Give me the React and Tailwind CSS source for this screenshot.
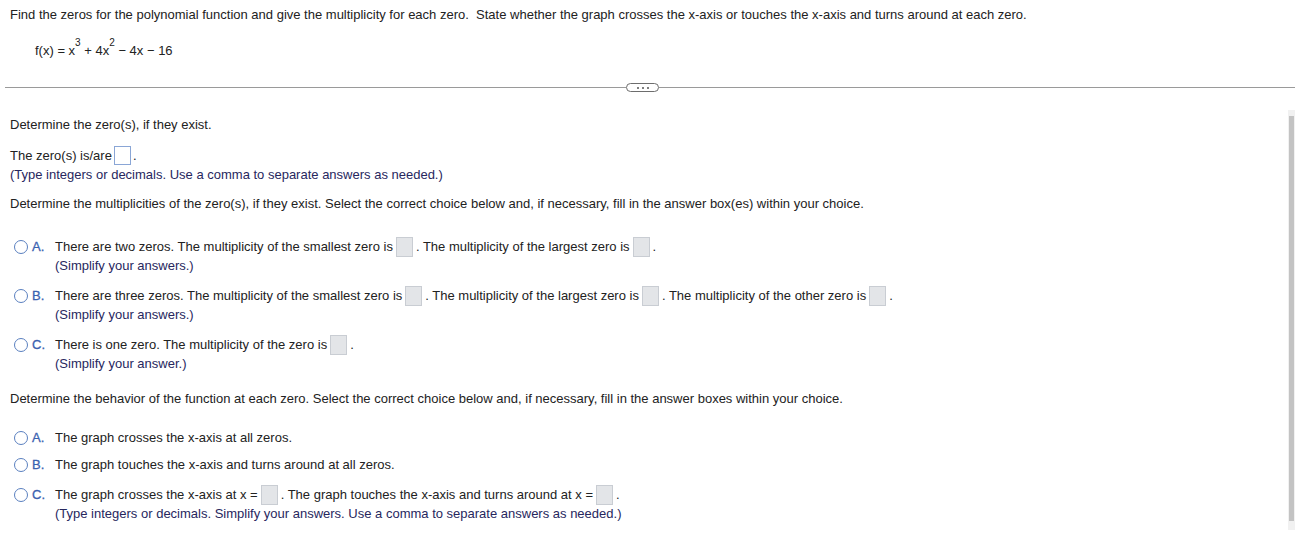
import React from 'react'

const font = { fontFamily: '"Liberation Sans", Arial, sans-serif' }

function Box({ active }) {
  return (
    <span
      className={
        active
          ? 'inline-block align-middle w-[17px] h-[19px] mx-[2px] border border-[#8aa6d6] bg-white'
          : 'inline-block align-middle w-[17px] h-[20px] mx-[3px] border border-[#c9cdd3] bg-[#e3e5e8]'
      }
    />
  )
}

function Radio({ letter }) {
  return (
    <div className="flex items-center h-[19px] w-[55px] shrink-0 pl-[14px]">
      <span className="inline-block w-[14px] h-[14px] rounded-full border border-[#5a7fbf] bg-white" />
      <span className="ml-[4px] text-[#3a62b0] text-[13px] [-webkit-text-stroke:0.3px_#3a62b0]">{letter}.</span>
    </div>
  )
}

function Choice({ letter, children, hint, className = '' }) {
  return (
    <div className={'flex items-start ' + className}>
      <Radio letter={letter} />
      <div>
        <div className="h-[19px] flex items-center text-[#222]">{children}</div>
        {hint && <div className="h-[19px] flex items-center text-[#27275e]">{hint}</div>}
      </div>
    </div>
  )
}

export default function App() {
  return (
    <div style={font} className="relative w-[1295px] h-[542px] bg-white text-[13px] leading-[19px] text-[#222] overflow-hidden">
      <div className="pl-[10px] pt-[5px]">
        Find the zeros for the polynomial function and give the multiplicity for each zero.&nbsp; State whether the graph crosses the x-axis or touches the x-axis and turns around at each zero.
      </div>
      <div className="pl-[35px] mt-[17px] h-[19px] flex items-center">
        <span>f(x) = x</span>
        <span className="relative -top-[8px] text-[10px]">3</span>
        <span>&nbsp;+ 4x</span>
        <span className="relative -top-[8px] text-[10px]">2</span>
        <span>&nbsp;− 4x − 16</span>
      </div>

      <div className="ml-[5px] mt-[23px] flex items-center h-[9px]">
        <div className="flex-1 h-px bg-[#9a9a9a]" />
        <div className="w-[33px] h-[9px] rounded-full border border-[#6d6d6d] bg-white flex items-center justify-center gap-[3px]">
          <span className="w-[2px] h-[2px] rounded-full bg-[#555]" />
          <span className="w-[2px] h-[2px] rounded-full bg-[#555]" />
          <span className="w-[2px] h-[2px] rounded-full bg-[#555]" />
        </div>
        <div className="flex-1 h-px bg-[#9a9a9a]" />
        <div className="w-[15px] h-px bg-[#9a9a9a]" />
      </div>

      <div className="pl-[10px] mt-[23px]">
        <div>Determine the zero(s), if they exist.</div>
        <div className="mt-[12px] h-[19px] flex items-center">
          The zero(s) is/are <Box active />.
        </div>
        <div className="text-[#27275e]">(Type integers or decimals. Use a comma to separate answers as needed.)</div>
        <div className="mt-[10px]">
          Determine the multiplicities of the zero(s), if they exist. Select the correct choice below and, if necessary, fill in the answer box(es) within your choice.
        </div>
      </div>

      <div className="mt-[24px]">
        <Choice letter="A" hint="(Simplify your answers.)">
          There are two zeros. The multiplicity of the smallest zero is <Box />. The multiplicity of the largest zero is <Box />.
        </Choice>
        <Choice letter="B" hint="(Simplify your answers.)" className="mt-[11px]">
          There are three zeros. The multiplicity of the smallest zero is <Box />. The multiplicity of the largest zero is <Box />. The multiplicity of the other zero is <Box />.
        </Choice>
        <Choice letter="C" hint="(Simplify your answer.)" className="mt-[11px]">
          There is one zero. The multiplicity of the zero is <Box />.
        </Choice>
      </div>

      <div className="pl-[10px] mt-[16px]">
        Determine the behavior of the function at each zero. Select the correct choice below and, if necessary, fill in the answer boxes within your choice.
      </div>

      <div className="mt-[20px]">
        <Choice letter="A">The graph crosses the x-axis at all zeros.</Choice>
        <Choice letter="B" className="mt-[8px]">The graph touches the x-axis and turns around at all zeros.</Choice>
        <Choice letter="C" hint="(Type integers or decimals. Simplify your answers. Use a comma to separate answers as needed.)" className="mt-[11px]">
          The graph crosses the x-axis at x = <Box />. The graph touches the x-axis and turns around at x = <Box />.
        </Choice>
      </div>

      <div className="absolute right-0 top-[110px] w-[7px] h-[420px] bg-[#f1f1f1]">
        <div className="mt-[6px] mx-auto w-[5px] h-[405px] bg-[#c3c3c3]" />
      </div>
    </div>
  )
}
